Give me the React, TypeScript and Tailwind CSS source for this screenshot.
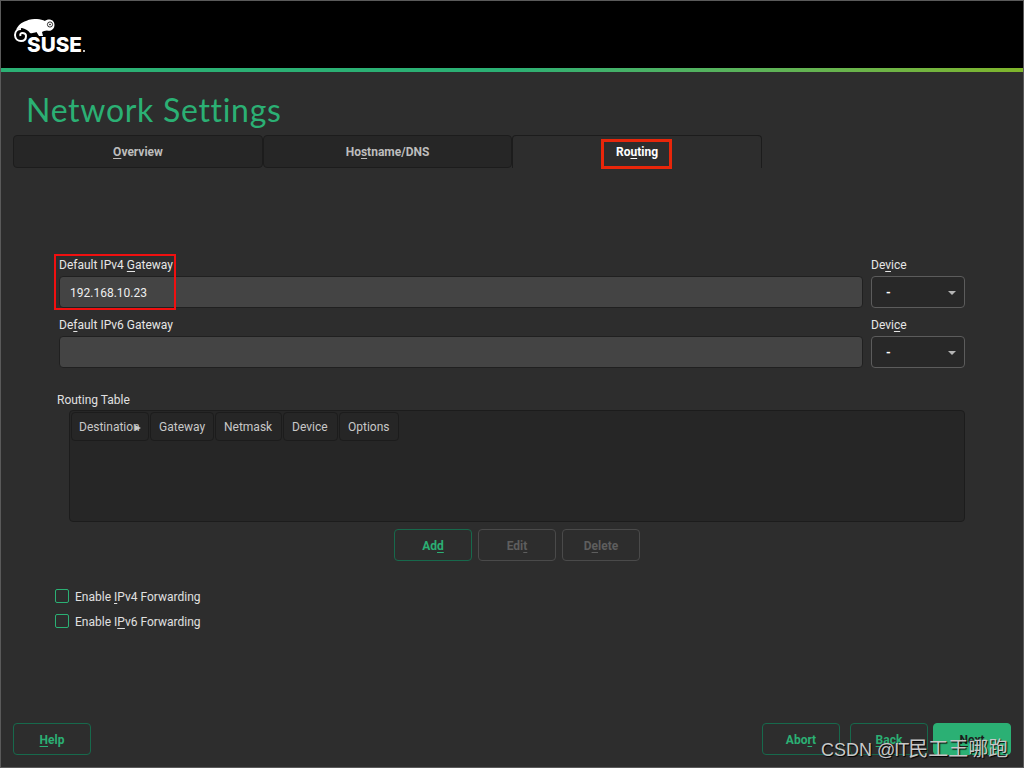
import type { ReactNode } from "react";

function Key({ children }: { children: ReactNode }) {
  return <span className="underline decoration-1 underline-offset-2">{children}</span>;
}

function SuseLogo() {
  return (
    <svg width="74" height="38" viewBox="0 0 74 38" className="block overflow-visible">
      <path
        d="M2 12 C4 7 8 4 12 3 C16 1 20 1 23 1 C26 1 29 2 31 3 C33 1 37 1 39 3 C41 5 41 9 39 11 C37 13 35 13 33 12.5 C31 13 29 13 28 14 L29 18 L25 18 L22.5 14 C20 15 18 15.5 16 15 C14 12 11 11 8 10 C6 10 4 11 2 12 Z"
        fill="#fff"
      />
      <circle cx="36" cy="6.5" r="2.6" fill="none" stroke="#000" strokeWidth="0.8" />
      <circle cx="36" cy="6.5" r="0.8" fill="#000" />
      <path
        d="M7 11 C3 11 1 14 1 17 C1 21 4 23 7 23 C10 23 12 21 12 18 C12 16 10 15 8 15 C6.5 15 6 16.5 6.5 18"
        fill="none"
        stroke="#fff"
        strokeWidth="2"
      />
      <text x="13" y="34" fill="#fff" fontFamily="Inter, sans-serif" fontWeight="800" fontSize="20.6" textLength="55" lengthAdjust="spacingAndGlyphs">
        SUSE
      </text>
      <circle cx="70" cy="33" r="1" fill="#fff" />
    </svg>
  );
}

function Tab({ active, width, children }: { active?: boolean; width: string; children: ReactNode }) {
  return (
    <div
      className={
        active
          ? `${width} h-[33px] flex items-center justify-center text-xs font-bold text-white border border-b-0 border-[#1c1c1c] rounded-t-sm`
          : `${width} h-[33px] flex items-center justify-center text-xs font-bold text-[#bdbdbd] bg-[#262626] border border-[#1c1c1c] rounded-sm`
      }
    >
      {children}
    </div>
  );
}

function Select() {
  return (
    <div className="h-[32px] w-[94px] flex items-center justify-between pl-[14px] pr-[8px] pt-px bg-[#282828] border border-[#5c5c5c] rounded-sm text-xs font-bold text-white">
      <span>-</span>
      <span className="w-0 h-0 border-x-[4px] border-x-transparent border-t-[4px] border-t-[#b4b4b4]" />
    </div>
  );
}

function GatewayRow({ label, device, value }: { label: ReactNode; device: ReactNode; value?: string }) {
  return (
    <div className="flex h-[60px] pl-[58px] gap-2">
      <div className="w-[804px]">
        <div className="h-[17px] text-xs leading-[19px] text-[#e6e6e6]">{label}</div>
        <div className="h-[32px] mt-[3px] flex items-center pl-[10px] pt-px bg-[#444444] border border-[#202020] rounded-sm text-xs text-[#eeeeee]">
          {value}
        </div>
      </div>
      <div>
        <div className="h-[17px] text-xs leading-[19px] text-[#e6e6e6]">{device}</div>
        <div className="mt-[3px]">
          <Select />
        </div>
      </div>
    </div>
  );
}

function HeaderCell({ width, children }: { width: string; children: ReactNode }) {
  return (
    <div className={`${width} h-[29px] flex items-center pl-[8px] relative bg-[#262626] border border-[#1c1c1c] rounded-sm text-xs text-[#c8c8c8]`}>
      {children}
    </div>
  );
}

function Button({ kind, children }: { kind: "green" | "off" | "solid"; children: ReactNode }) {
  const look = {
    green: "border-[#17694c] text-[#2bb074]",
    off: "border-[#4a4a4a] text-[#5e5e5e]",
    solid: "border-[#2bb074] bg-[#2bb074] text-[#1c1c1c]",
  }[kind];
  return (
    <div className={`w-[78px] h-[32px] flex items-center justify-center pt-px border rounded-sm text-xs font-bold ${look}`}>
      {children}
    </div>
  );
}

function Check({ children }: { children: ReactNode }) {
  return (
    <div className="flex items-center gap-[6px] h-[25px] text-xs text-[#e0e0e0]">
      <span className="w-[14px] h-[14px] -mt-px border border-[#2bb074] rounded-[2px]" />
      <span>{children}</span>
    </div>
  );
}

export default function App() {
  return (
    <div className="relative w-[1024px] h-[768px] flex flex-col bg-[#2d2d2d] border border-[#5a5a5a] overflow-hidden font-['Roboto',sans-serif]">
      <header className="h-[67px] shrink-0 bg-black pl-[13px] pt-[17px]">
        <SuseLogo />
      </header>
      <div className="h-[4px] shrink-0 bg-gradient-to-r from-[#2bb074] via-[#2bb074] to-[#7fb52a]" />

      <h1 className="pl-[25px] mt-[18px] h-[45px] text-[32px] leading-[40px] font-normal text-[#2bb074] font-['Lato',sans-serif] tracking-[0.7px]">
        Network Settings
      </h1>

      <nav className="flex pl-[12px]">
        <Tab width="w-[250px]"><span><Key>O</Key>verview</span></Tab>
        <Tab width="w-[249px]"><span>Ho<Key>s</Key>tname/DNS</span></Tab>
        <Tab active width="w-[250px]"><span>Ro<Key>u</Key>ting</span></Tab>
      </nav>

      <main className="pt-[88px] flex flex-col">
        <GatewayRow
          label={<>Default IPv4 <Key>G</Key>ateway</>}
          device={<>De<Key>v</Key>ice</>}
          value="192.168.10.23"
        />
        <GatewayRow
          label={<>De<Key>f</Key>ault IPv6 Gateway</>}
          device={<>Devi<Key>c</Key>e</>}
        />

        <div className="pl-[56px] mt-[14px] h-[20px] text-xs leading-[20px] text-[#e0e0e0]">Routing Table</div>
        <div className="ml-[68px] w-[896px] h-[112px] p-[1px] bg-[#262626] border border-[#1c1c1c] rounded-sm flex gap-[1px] items-start">
          <HeaderCell width="w-[78px]">
            <span className="-ml-px">Destination</span>
            <span className="absolute right-[7px] top-[12px] w-0 h-0 border-y-[3px] border-y-transparent border-l-[6px] border-l-[#c8c8c8]" />
          </HeaderCell>
          <HeaderCell width="w-[64px]">Gateway</HeaderCell>
          <HeaderCell width="w-[67px]">Netmask</HeaderCell>
          <HeaderCell width="w-[55px]">Device</HeaderCell>
          <HeaderCell width="w-[60px]">Options</HeaderCell>
        </div>

        <div className="flex justify-center gap-[6px] mt-[7px] pl-[10px]">
          <Button kind="green"><span>Ad<Key>d</Key></span></Button>
          <Button kind="off"><span>Edi<Key>t</Key></span></Button>
          <Button kind="off"><span>D<Key>e</Key>lete</span></Button>
        </div>

        <div className="pl-[54px] mt-[23px]">
          <Check>Enable <Key>I</Key>Pv4 Forwarding</Check>
          <Check>Enable I<Key>P</Key>v6 Forwarding</Check>
        </div>
      </main>

      <footer className="mt-auto mb-[12px] px-[12px] flex">
        <Button kind="green"><span><Key>H</Key>elp</span></Button>
        <div className="ml-auto flex">
          <Button kind="green"><span>Abo<Key>r</Key>t</span></Button>
          <div className="w-[10px]" />
          <Button kind="green"><span><Key>B</Key>ack</span></Button>
          <div className="w-[5px]" />
          <Button kind="solid"><span><Key>N</Key>ext</span></Button>
        </div>
      </footer>

      {/* annotations on top of the screenshot */}
      <div className="absolute left-[600px] top-[138px] w-[71px] h-[30px] border-[3px] border-[#e8260a]" />
      <div className="absolute left-[53px] top-[253px] w-[122px] h-[56px] border-2 border-[#f01010]" />
      <div className="absolute left-[820px] top-[736px] text-[18px] leading-[24px] text-[#c8c8c8] [text-shadow:1px_1px_1px_#000] font-['Liberation_Sans','Noto_Sans_CJK_SC',sans-serif]">
        CSDN <span className="tracking-[-1px]">@IT</span><span className="text-[20px]">民工王哪跑</span>
      </div>
    </div>
  );
}
